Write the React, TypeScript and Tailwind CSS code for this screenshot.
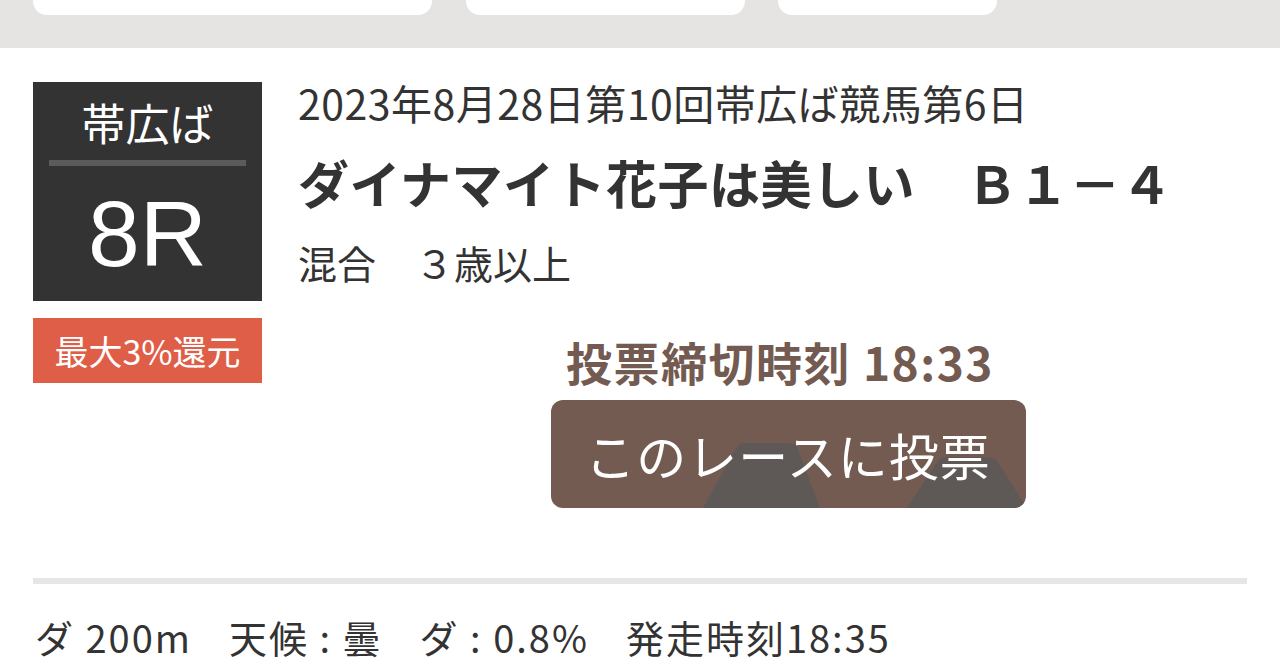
import React from 'react';

const jp = { fontFamily: '"Noto Sans CJK JP", "Noto Sans", sans-serif' };

const TopTabs = () => (
    <div className="h-[48px] bg-[#e5e4e3] relative">
        <div className="flex">
            <div className="ml-[33px] w-[399px] h-[15px] bg-white rounded-b-[14px]" />
            <div className="ml-[34px] w-[279px] h-[15px] bg-white rounded-b-[14px]" />
            <div className="ml-[33px] w-[219px] h-[15px] bg-white rounded-b-[14px]" />
        </div>
    </div>
);

const VoteButton = () => (
    <button className="relative w-[475px] h-[108px] rounded-[12px] bg-[#735b51] overflow-hidden">
        {/* mountain motif behind the label */}
        <svg className="absolute inset-0" width="475" height="108" viewBox="0 0 475 108">
            <path d="M152 108 L186 47 Q189 43 194 43 L238 43 Q243 43 246 47 L269 108 Z" fill="#5e5957" />
            <path d="M356 108 L387 61 Q390 57 395 57 L438 57 Q443 57 446 61 L476 108 Z" fill="#5e5957" />
        </svg>
        <span className="relative text-white text-[50px] leading-[108px] tracking-[1px]">このレースに投票</span>
    </button>
);

export default function App() {
    return (
        <div className="w-[1280px] h-[670px] bg-white text-[#333] overflow-hidden" style={jp}>
            <TopTabs />

            <div className="flex pl-[33px] pt-[34px]">
                {/* left: venue / race number */}
                <div className="w-[229px] shrink-0">
                    <div className="h-[219px] bg-[#333] flex flex-col items-center">
                        <div className="text-white text-[44px] leading-[44px] mt-[18px]">帯広ば</div>
                        <div className="w-[197px] h-[6px] bg-[#5b5b5b] mt-[16px]" />
                        <div className="text-white text-[93px] leading-[93px] mt-[22px]" style={{ fontFamily: '"Liberation Sans", Arial, sans-serif' }}>8R</div>
                    </div>
                    <div className="h-[65px] mt-[17px] bg-[#df5e47] text-white text-[34px] leading-[65px] text-center">最大3%還元</div>
                </div>

                {/* right: race info */}
                <div className="flex-1 ml-[36px] pr-[2px]">
                    <div className="text-[41px] leading-[40px] tracking-[0.5px]">2023年8月28日第10回帯広ば競馬第6日</div>
                    <div className="text-[51px] leading-[50px] font-bold mt-[35px] tracking-[0.5px]">ダイナマイト花子は美しい　Ｂ１－４</div>
                    <div className="text-[39px] leading-[40px] mt-[35px]">混合　３歳以上</div>
                    <div className="flex flex-col items-center mt-[57px]">
                        <div className="text-[46px] leading-[44px] font-bold text-[#735b51] tracking-[1.5px] mr-[16px]">投票締切時刻 18:33</div>
                        <div className="mt-[17px]">
                            <VoteButton />
                        </div>
                    </div>
                </div>
            </div>

            <div className="mx-[33px] mt-[70px] h-[6px] bg-[#e6e6e6]" />

            <div className="flex gap-[37px] px-[35px] mt-[33px] text-[38px] leading-[40px] tracking-[2px]">
                <span>ダ 200m</span>
                <span>天候 : 曇</span>
                <span>ダ : 0.8%</span>
                <span>発走時刻18:35</span>
            </div>
        </div>
    );
}
